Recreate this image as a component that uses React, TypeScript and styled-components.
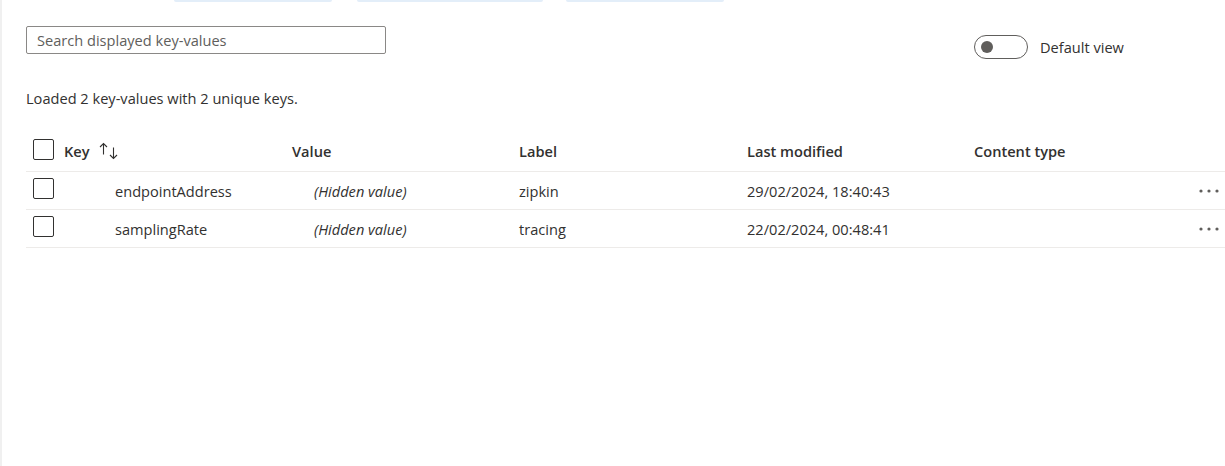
import React from "react";
import styled, { createGlobalStyle } from "styled-components";

const GlobalStyle = createGlobalStyle`
  html, body { margin: 0; padding: 0; background: #ffffff; }
  body {
    font-family: "Open Sans", "Noto Sans", "Liberation Sans", sans-serif;
    font-size: 14.6px;
    color: #323130;
    -webkit-font-smoothing: antialiased;
  }
  * { box-sizing: border-box; }
`;

const Page = styled.div`
  width: 1225px;
  height: 466px;
  border-left: 2px solid #f0f0f0;
  overflow: hidden;
  display: flex;
  flex-direction: column;
`;

const StubBar = styled.div`
  display: flex;
  height: 2px;
  padding-left: 170px;
`;

const Stub = styled.div<{ $w: number; $ml: number }>`
  width: ${(p) => p.$w}px;
  margin-left: ${(p) => p.$ml}px;
  height: 2px;
  border-radius: 0 0 3px 3px;
  background: #e3eef9;
`;

const Content = styled.div`
  padding-left: 24px;
  display: flex;
  flex-direction: column;
`;

const TopRow = styled.div`
  display: flex;
  align-items: flex-start;
  margin-top: 24px;
`;

const Search = styled.input`
  width: 360px;
  height: 28px;
  border: 1px solid #8a8886;
  border-radius: 2px;
  padding: 0 10px;
  font: inherit;
  color: #323130;
  outline: none;
  &::placeholder { color: #605e5c; }
`;

const ToggleGroup = styled.label`
  display: flex;
  align-items: center;
  gap: 12px;
  margin-left: 588px;
  margin-top: 9px;
  color: #323130;
`;

const Track = styled.span`
  width: 54px;
  height: 24px;
  border: 1px solid #605e5c;
  border-radius: 12px;
  display: flex;
  align-items: center;
  padding-left: 6px;
`;

const Knob = styled.span`
  width: 12px;
  height: 12px;
  border-radius: 50%;
  background: #605e5c;
`;

const Status = styled.div`
  margin-top: 29px;
  height: 20px;
  line-height: 20px;
`;

const Table = styled.div`
  margin-top: 22px;
  display: flex;
  flex-direction: column;
`;

const Row = styled.div<{ $header?: boolean }>`
  display: grid;
  grid-template-columns: 38px 228px 227px 228px 227px 1fr 36px;
  height: ${(p) => (p.$header ? 42 : 38)}px;
  border-bottom: 1px solid #edebe9;
  align-items: center;
  font-weight: ${(p) => (p.$header ? 600 : 400)};
`;

const CheckCell = styled.div<{ $top: number }>`
  align-self: start;
  padding-top: ${(p) => p.$top}px;
  padding-left: 7px;
`;

const Box = styled.span`
  display: block;
  width: 21px;
  height: 21px;
  border: 1px solid #323130;
  border-radius: 2px;
  background: #fff;
`;

const Cell = styled.div<{ $indent?: number; $italic?: boolean }>`
  padding-left: ${(p) => p.$indent ?? 0}px;
  font-style: ${(p) => (p.$italic ? "italic" : "normal")};
  white-space: nowrap;
  display: flex;
  align-items: center;
  gap: 9px;
`;

const MoreCell = styled.div`
  display: flex;
  align-items: center;
  padding-left: 10px;
`;

const SortIcon = () => (
  <svg width="22" height="18" viewBox="0 0 22 18" fill="none" stroke="#323130" strokeWidth="1.1">
    <path d="M4.5 1.5 V12.5 M1 5 L4.5 1.5 L8 5" />
    <path d="M14.5 5.5 V16.5 M11 13 L14.5 16.5 L18 13" />
  </svg>
);

const MoreIcon = () => (
  <svg width="22" height="4" viewBox="0 0 22 4" fill="#605e5c">
    <circle cx="2" cy="2" r="1.6" />
    <circle cx="10" cy="2" r="1.6" />
    <circle cx="18" cy="2" r="1.6" />
  </svg>
);

const rows = [
  { key: "endpointAddress", label: "zipkin", modified: "29/02/2024, 18:40:43" },
  { key: "samplingRate", label: "tracing", modified: "22/02/2024, 00:48:41" },
];

export default function App() {
  return (
    <>
      <GlobalStyle />
      <Page>
        <StubBar>
          <Stub $w={158} $ml={2} />
          <Stub $w={186} $ml={25} />
          <Stub $w={158} $ml={23} />
        </StubBar>
        <Content>
          <TopRow>
            <Search placeholder="Search displayed key-values" />
            <ToggleGroup>
              <Track>
                <Knob />
              </Track>
              Default view
            </ToggleGroup>
          </TopRow>
          <Status>Loaded 2 key-values with 2 unique keys.</Status>
          <Table>
            <Row $header>
              <CheckCell $top={9}>
                <Box />
              </CheckCell>
              <Cell>
                Key <SortIcon />
              </Cell>
              <Cell>Value</Cell>
              <Cell>Label</Cell>
              <Cell>Last modified</Cell>
              <Cell>Content type</Cell>
              <Cell />
            </Row>
            {rows.map((r) => (
              <Row key={r.key}>
                <CheckCell $top={6}>
                  <Box />
                </CheckCell>
                <Cell $indent={51}>{r.key}</Cell>
                <Cell $indent={22} $italic>
                  (Hidden value)
                </Cell>
                <Cell>{r.label}</Cell>
                <Cell>{r.modified}</Cell>
                <Cell />
                <MoreCell>
                  <MoreIcon />
                </MoreCell>
              </Row>
            ))}
          </Table>
        </Content>
      </Page>
    </>
  );
}
